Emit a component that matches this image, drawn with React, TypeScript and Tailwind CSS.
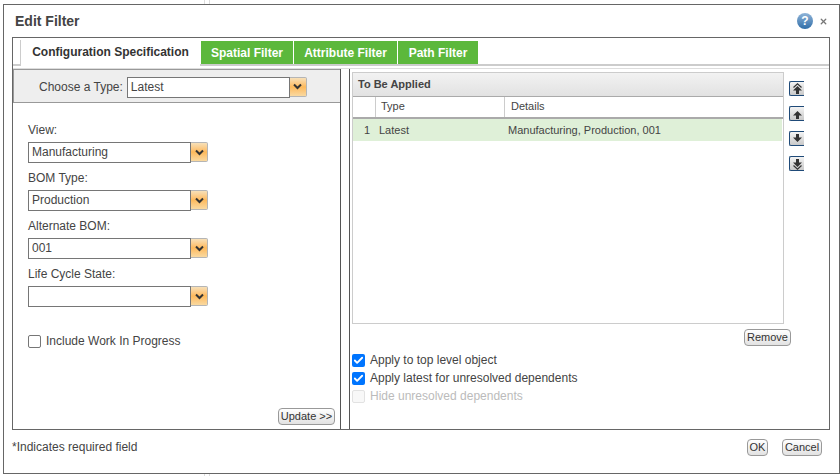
import { Check, X } from 'lucide-react'

function Combo({ value }: { value: string }) {
  return (
    <div className="flex items-start">
      <div className="h-[21px] w-[163px] border border-[#767676] bg-white pl-[3px] text-[12px] leading-[19px] text-[#444]">
        {value}
      </div>
      <div className="flex h-[20px] w-[17px] items-center justify-center rounded-r-[2px] border border-l-0 border-[#b5b5b5] bg-gradient-to-b from-[#f7e0b8] via-[#fdb95a] to-[#f9d9a0]">
        <svg width="9" height="7" viewBox="0 0 9 7">
          <path d="M1 1.5 L4.5 5 L8 1.5" fill="none" stroke="#333" strokeWidth="2" />
        </svg>
      </div>
    </div>
  )
}

function Field({ label, value }: { label: string; value: string }) {
  return (
    <div className="flex h-[48px] flex-col">
      <div className="h-[15px] text-[12px] leading-[15px] text-[#444]">{label}</div>
      <div className="mt-[4px]">
        <Combo value={value} />
      </div>
    </div>
  )
}

function GreyButton({ label, className }: { label: string; className: string }) {
  return (
    <div className={`${className} flex h-[17px] items-center justify-center whitespace-nowrap rounded-[4px] border border-[#999] bg-gradient-to-b from-white to-[#e2e2e2] text-[11px] leading-none text-[#333]`}>
      {label}
    </div>
  )
}

function MoveButton({ dir, double }: { dir: 'up' | 'down'; double?: boolean }) {
  return (
    <div className="flex h-[15px] w-[15px] items-center justify-center rounded-l-[2px] border-y border-l border-[#1f4a78] bg-gradient-to-b from-[#f4f4f4] to-[#c9c9c9]">
      <svg width="11" height="12" viewBox="0 0 11 12" className={dir === 'down' ? 'rotate-180' : ''}>
        {double && <path d="M1.5 4.5 L5.5 0.8 L9.5 4.5" fill="none" stroke="#333" strokeWidth="1.2" />}
        <path d="M5.5 3 L10 7.5 L7 7.5 L7 11 L4 11 L4 7.5 L1 7.5 Z" fill="#333" />
      </svg>
    </div>
  )
}

function CheckRow({ label, checked, disabled }: { label: string; checked?: boolean; disabled?: boolean }) {
  return (
    <div className="flex h-[18px] items-center gap-[5px]">
      {checked ? (
        <div className="flex h-[13px] w-[13px] items-center justify-center rounded-[2px] bg-[#0075ff]">
          <Check size={11} color="white" strokeWidth={4} />
        </div>
      ) : (
        <div className={`h-[13px] w-[13px] rounded-[2px] border ${disabled ? 'border-[#e2e2e2] bg-[#f8f8f8]' : 'border-[#767676] bg-white'}`} />
      )}
      <span className={`text-[12px] ${disabled ? 'text-[#bbb]' : 'text-[#444]'}`}>{label}</span>
    </div>
  )
}

export default function App() {
  return (
    <div className="relative h-[476px] w-[840px] overflow-hidden bg-white pl-[3px] pt-[4px] font-['Liberation_Sans',Arial,sans-serif]">
      {/* page behind the dialog */}
      <div className="absolute left-[204px] top-0 h-full w-px bg-[#ddd]" />
      <div className="absolute left-[209px] top-0 h-full w-px bg-[#ddd]" />

      <div className="relative flex h-[470px] w-[837px] flex-col border border-[#666] bg-white pl-[8px]">
        {/* title bar */}
        <div className="flex h-[32px] items-center justify-between pr-[11px]">
          <div className="pl-[3px] pt-[1px] text-[14px] font-bold text-[#444]">Edit Filter</div>
          <div className="flex items-center gap-[6px]">
            <div className="flex h-[16px] w-[16px] items-center justify-center rounded-full bg-gradient-to-b from-[#8fb4d8] to-[#2f6ea8] text-[12px] font-bold leading-none text-white">
              ?
            </div>
            <X size={9} color="#777" strokeWidth={3.5} />
          </div>
        </div>

        {/* main panel */}
        <div className="flex h-[393px] w-[818px] flex-col border border-[#666]">
          <div className="flex h-[28px] items-start border-b-[2px] border-[#ccc] pl-[7px]">
            <div className="mt-[2px] flex h-[26px] w-[180px] items-center justify-center border-l border-[#ccc] bg-white pb-[2px] text-[12px] font-bold text-[#333]">
              Configuration Specification
            </div>
            <div className="ml-[1px] mt-[3px] flex h-[23px] w-[92px] items-center justify-center bg-[#5cb83c] text-[12px] font-bold text-white">
              Spatial Filter
            </div>
            <div className="ml-[1px] mt-[3px] flex h-[23px] w-[103px] items-center justify-center bg-[#5cb83c] text-[12px] font-bold text-white">
              Attribute Filter
            </div>
            <div className="ml-[1px] mt-[3px] flex h-[23px] w-[80px] items-center justify-center bg-[#5cb83c] text-[12px] font-bold text-white">
              Path Filter
            </div>
          </div>
          <div className="h-[3px] border-b border-[#ddd]" />

          <div className="flex flex-1">
            {/* left pane */}
            <div className="flex w-[328px] flex-col border-r border-[#555]">
              <div className="flex h-[34px] items-center border-y border-l border-[#999] bg-[#eee] pl-[25px] pt-[2px]">
                <span className="mr-[4px] text-[12px] text-[#444]">Choose a Type:</span>
                <Combo value="Latest" />
              </div>
              <div className="flex flex-1 flex-col pl-[15px] pt-[20px]">
                <Field label="View:" value="Manufacturing" />
                <Field label="BOM Type:" value="Production" />
                <Field label="Alternate BOM:" value="001" />
                <Field label="Life Cycle State:" value="" />
                <div className="mt-[17px] flex items-center gap-[5px]">
                  <div className="h-[13px] w-[13px] rounded-[2px] border border-[#767676] bg-white" />
                  <span className="text-[12px] text-[#444]">Include Work In Progress</span>
                </div>
                <div className="mt-auto flex justify-end pb-[4px] pr-[5px]">
                  <GreyButton label="Update >>" className="w-[57px]" />
                </div>
              </div>
            </div>

            {/* right pane */}
            <div className="ml-[8px] flex flex-1 flex-col border-l border-[#555] pl-[2px] pt-[3px]">
              <div className="flex">
                <div className="flex h-[252px] w-[432px] flex-col border border-[#ccc]">
                  <div className="flex h-[24px] items-center border-b border-[#aaa] bg-gradient-to-b from-[#f2f2f2] to-[#e2e2e2] pl-[5px] text-[11px] font-bold text-[#444]">
                    To Be Applied
                  </div>
                  <div className="flex h-[22px] border-b-[2px] border-[#aaa] text-[11px] text-[#444]">
                    <div className="w-[23px] border-r border-[#ccc]" />
                    <div className="w-[129px] border-r border-[#ccc] pl-[5px] leading-[19px]">Type</div>
                    <div className="flex-1 pl-[6px] leading-[19px]">Details</div>
                  </div>
                  <div className="mr-[1px] flex h-[22px] items-center bg-[#dff0d8] text-[11px] text-[#444]">
                    <div className="w-[17px] text-right">1</div>
                    <div className="w-[138px] pl-[9px]">Latest</div>
                    <div>Manufacturing, Production, 001</div>
                  </div>
                </div>
                <div className="ml-[5px] flex flex-col pt-[9px]">
                  <MoveButton dir="up" double />
                  <div className="mt-[10px]"><MoveButton dir="up" /></div>
                  <div className="mt-[10px]"><MoveButton dir="down" /></div>
                  <div className="mt-[10px]"><MoveButton dir="down" double /></div>
                </div>
              </div>
              <div className="flex justify-end pr-[38px] pt-[5px]">
                <GreyButton label="Remove" className="w-[47px]" />
              </div>
              <div className="mt-[5px] flex flex-col">
                <CheckRow label="Apply to top level object" checked />
                <CheckRow label="Apply latest for unresolved dependents" checked />
                <CheckRow label="Hide unresolved dependents" disabled />
              </div>
            </div>
          </div>
        </div>

        {/* footer */}
        <div className="flex flex-1 items-start justify-between pr-[17px] pt-[9px]">
          <div className="pt-[1px] text-[12px] leading-[15px] text-[#444]">*Indicates required field</div>
          <div className="flex gap-[14px]">
            <GreyButton label="OK" className="w-[21px]" />
            <GreyButton label="Cancel" className="w-[40px]" />
          </div>
        </div>
      </div>
    </div>
  )
}
